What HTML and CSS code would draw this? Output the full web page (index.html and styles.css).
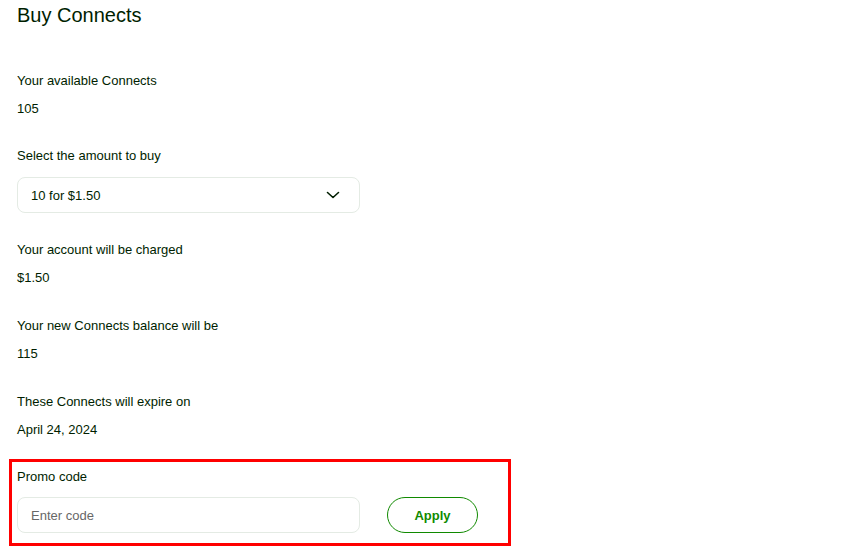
FILE: index.html
```html
<!DOCTYPE html>
<html lang="en">
<head>
<meta charset="utf-8">
<title>Buy Connects</title>
<link rel="stylesheet" href="styles.css">
</head>
<body>
<main class="page">
  <h1 class="title">Buy Connects</h1>

  <section class="field f-available">
    <div class="label">Your available Connects</div>
    <div class="value">105</div>
  </section>

  <section class="field f-select">
    <div class="label">Select the amount to buy</div>
    <div class="select">
      <span>10 for $1.50</span>
      <svg class="chev" width="14" height="8" viewBox="0 0 14 8" aria-hidden="true">
        <path d="M1.5 1.5 L7 6.5 L12.5 1.5" fill="none" stroke="#001e00" stroke-width="1.6" stroke-linecap="round" stroke-linejoin="round"/>
      </svg>
    </div>
  </section>

  <section class="field f-charged">
    <div class="label">Your account will be charged</div>
    <div class="value">$1.50</div>
  </section>

  <section class="field f-balance">
    <div class="label">Your new Connects balance will be</div>
    <div class="value">115</div>
  </section>

  <section class="field f-expire">
    <div class="label">These Connects will expire on</div>
    <div class="value">April 24, 2024</div>
  </section>

  <section class="promo">
    <div class="label">Promo code</div>
    <div class="promo-row">
      <div class="input">Enter code</div>
      <button class="apply" type="button">Apply</button>
    </div>
  </section>
</main>
</body>
</html>
```

FILE: styles.css
```css
html, body {
  margin: 0;
  padding: 0;
  background: #ffffff;
}

body {
  font-family: "Liberation Sans", Arial, sans-serif;
  color: #001e00;
  font-size: 13px;
}

.page {
  padding: 0 0 0 17px;
}

.title {
  margin: 0;
  padding-top: 3px;
  font-size: 20px;
  line-height: 24px;
  font-weight: 400;
}

.field {
  display: flex;
  flex-direction: column;
}

.f-available {
  margin-top: 44px;
}

.f-select {
  margin-top: 27px;
}

.f-charged {
  margin-top: 27px;
}

.f-balance,
.f-expire {
  margin-top: 28px;
}

.label {
  line-height: 20px;
}

.value {
  margin-top: 8px;
  line-height: 20px;
}

.select {
  margin-top: 11px;
  width: 343px;
  height: 36px;
  box-sizing: border-box;
  border: 1px solid #e4ebe4;
  border-radius: 8px;
  display: flex;
  align-items: center;
  justify-content: space-between;
  padding: 0 19px 0 13px;
}

.chev {
  display: block;
}

.promo {
  margin-top: 19px;
  margin-left: -8px;
  width: 502px;
  box-sizing: border-box;
  border: 3px solid #ff0000;
  padding: 5px 0 10px 5px;
}

.promo-row {
  margin-top: 10px;
  display: flex;
  align-items: center;
  gap: 27px;
}

.input {
  width: 343px;
  height: 36px;
  box-sizing: border-box;
  border: 1px solid #e4ebe4;
  border-radius: 8px;
  display: flex;
  align-items: center;
  padding: 0 13px;
  color: #676767;
}

.apply {
  width: 91px;
  height: 36px;
  box-sizing: border-box;
  border: 1px solid #108a00;
  border-radius: 18px;
  background: #ffffff;
  color: #108a00;
  font-family: "Liberation Sans", Arial, sans-serif;
  font-size: 13px;
  font-weight: 700;
  padding: 0;
}
```
